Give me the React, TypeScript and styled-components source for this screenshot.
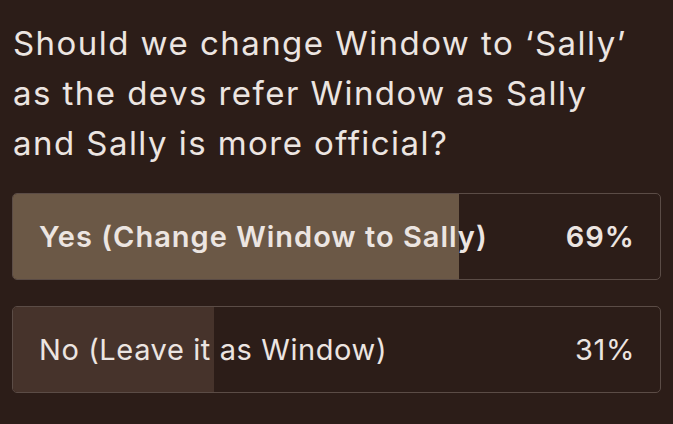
import { createGlobalStyle, styled } from "styled-components";

const GlobalStyle = createGlobalStyle`
  html, body {
    margin: 0;
    padding: 0;
    background-color: #2c1d18;
  }
  body {
    font-family: Inter, "Noto Sans", sans-serif;
    color: #ece5e1;
  }
`;

interface PollOption {
  label: string;
  percent: number;
  chosen?: boolean;
}

const options: PollOption[] = [
  { label: "Yes (Change Window to Sally)", percent: 69, chosen: true },
  { label: "No (Leave it as Window)", percent: 31 },
];

export default function App() {
  return (
    <>
      <GlobalStyle />
      <PollCard>
        <Question>
          Should we change Window to ‘Sally’ as the devs refer Window as Sally
          and Sally is more official?
        </Question>
        <OptionList>
          {options.map((option) => (
            <OptionRow key={option.label} chosen={option.chosen}>
              <OptionFill chosen={option.chosen} style={{ width: option.percent + "%" }} />
              <OptionLabel>{option.label}</OptionLabel>
              <OptionPercent>{option.percent}%</OptionPercent>
            </OptionRow>
          ))}
        </OptionList>
      </PollCard>
    </>
  );
}

const PollCard = styled.div`
  padding: 18px 12px 0 12px;
  display: grid;
  row-gap: 25px;
`;

const Question = styled.div`
  font-size: 33px;
  line-height: 50px;
  letter-spacing: 1.45px;
  padding-left: 1px;
  width: 640px;
`;

const OptionList = styled.div`
  display: grid;
  row-gap: 26px;
`;

const OptionRow = styled.div<{ chosen?: boolean }>`
  position: relative;
  overflow: hidden;
  height: 87px;
  box-sizing: border-box;
  border: 1.5px solid #5b4c46;
  border-radius: 5px;
  display: flex;
  align-items: center;
  justify-content: space-between;
  padding: 0 26px 0 26px;
  font-size: 29px;
  font-weight: ${(props) => (props.chosen ? 600 : 400)};
  letter-spacing: ${(props) => (props.chosen ? "1px" : "0.6px")};
`;

const OptionFill = styled.div<{ chosen?: boolean }>`
  position: absolute;
  left: 0;
  top: 0;
  bottom: 0;
  background-color: ${(props) => (props.chosen ? "#6b5846" : "#46332b")};
`;

const OptionLabel = styled.span`
  position: relative;
`;

const OptionPercent = styled.span`
  position: relative;
  margin-right: -1px;
`;
